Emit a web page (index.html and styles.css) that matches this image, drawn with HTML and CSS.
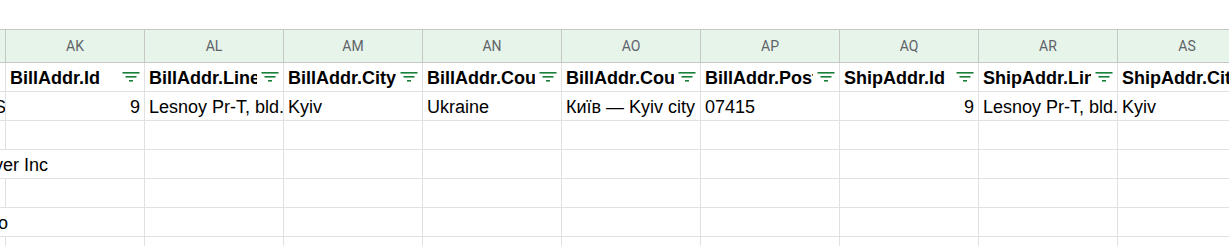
FILE: index.html
```html
<!DOCTYPE html>
<html>
<head>
<meta charset="utf-8">
<link rel="stylesheet" href="styles.css">
</head>
<body>
<div class="sheet">
  <div class="spacer"></div>
  <div class="row colhead">
    <div class="c first"></div>
    <div class="c">AK</div>
    <div class="c">AL</div>
    <div class="c">AM</div>
    <div class="c">AN</div>
    <div class="c">AO</div>
    <div class="c">AP</div>
    <div class="c">AQ</div>
    <div class="c">AR</div>
    <div class="c">AS</div>
  </div>
  <div class="row hdr">
    <div class="c first"></div>
    <div class="c f"><span class="t">BillAddr.Id</span><span class="fb"><svg width="18" height="12" viewBox="0 0 18 12"><rect x="0.5" y="1" width="17" height="1.6"/><rect x="3.5" y="5" width="11" height="1.6"/><rect x="7" y="9" width="4" height="1.6"/></svg></span></div>
    <div class="c f"><span class="t">BillAddr.Line1</span><span class="fb"><svg width="18" height="12" viewBox="0 0 18 12"><rect x="0.5" y="1" width="17" height="1.6"/><rect x="3.5" y="5" width="11" height="1.6"/><rect x="7" y="9" width="4" height="1.6"/></svg></span></div>
    <div class="c f"><span class="t">BillAddr.City</span><span class="fb"><svg width="18" height="12" viewBox="0 0 18 12"><rect x="0.5" y="1" width="17" height="1.6"/><rect x="3.5" y="5" width="11" height="1.6"/><rect x="7" y="9" width="4" height="1.6"/></svg></span></div>
    <div class="c f"><span class="t">BillAddr.Country</span><span class="fb"><svg width="18" height="12" viewBox="0 0 18 12"><rect x="0.5" y="1" width="17" height="1.6"/><rect x="3.5" y="5" width="11" height="1.6"/><rect x="7" y="9" width="4" height="1.6"/></svg></span></div>
    <div class="c f"><span class="t">BillAddr.CountrySubDivisionCode</span><span class="fb"><svg width="18" height="12" viewBox="0 0 18 12"><rect x="0.5" y="1" width="17" height="1.6"/><rect x="3.5" y="5" width="11" height="1.6"/><rect x="7" y="9" width="4" height="1.6"/></svg></span></div>
    <div class="c f"><span class="t">BillAddr.PostalCode</span><span class="fb"><svg width="18" height="12" viewBox="0 0 18 12"><rect x="0.5" y="1" width="17" height="1.6"/><rect x="3.5" y="5" width="11" height="1.6"/><rect x="7" y="9" width="4" height="1.6"/></svg></span></div>
    <div class="c f"><span class="t">ShipAddr.Id</span><span class="fb"><svg width="18" height="12" viewBox="0 0 18 12"><rect x="0.5" y="1" width="17" height="1.6"/><rect x="3.5" y="5" width="11" height="1.6"/><rect x="7" y="9" width="4" height="1.6"/></svg></span></div>
    <div class="c f"><span class="t">ShipAddr.Line1</span><span class="fb"><svg width="18" height="12" viewBox="0 0 18 12"><rect x="0.5" y="1" width="17" height="1.6"/><rect x="3.5" y="5" width="11" height="1.6"/><rect x="7" y="9" width="4" height="1.6"/></svg></span></div>
    <div class="c"><span class="t">ShipAddr.City</span></div>
  </div>
  <div class="row">
    <div class="c first"><span class="frag-s">S</span></div>
    <div class="c num">9</div>
    <div class="c">Lesnoy Pr-T, bld. 7</div>
    <div class="c">Kyiv</div>
    <div class="c">Ukraine</div>
    <div class="c">Київ — Kyiv city</div>
    <div class="c">07415</div>
    <div class="c num">9</div>
    <div class="c">Lesnoy Pr-T, bld. 7</div>
    <div class="c">Kyiv</div>
  </div>
  <div class="row">
    <div class="c first"></div>
    <div class="c"></div><div class="c"></div><div class="c"></div><div class="c"></div><div class="c"></div><div class="c"></div><div class="c"></div><div class="c"></div><div class="c"></div>
  </div>
  <div class="row">
    <div class="c first ov"><span class="frag-inc">ver Inc</span></div>
    <div class="c"></div><div class="c"></div><div class="c"></div><div class="c"></div><div class="c"></div><div class="c"></div><div class="c"></div><div class="c"></div><div class="c"></div>
  </div>
  <div class="row">
    <div class="c first"></div>
    <div class="c"></div><div class="c"></div><div class="c"></div><div class="c"></div><div class="c"></div><div class="c"></div><div class="c"></div><div class="c"></div><div class="c"></div>
  </div>
  <div class="row">
    <div class="c first ov"><span class="frag-o">o</span></div>
    <div class="c"></div><div class="c"></div><div class="c"></div><div class="c"></div><div class="c"></div><div class="c"></div><div class="c"></div><div class="c"></div><div class="c"></div>
  </div>
  <div class="row">
    <div class="c first"></div>
    <div class="c"></div><div class="c"></div><div class="c"></div><div class="c"></div><div class="c"></div><div class="c"></div><div class="c"></div><div class="c"></div><div class="c"></div>
  </div>
</div>
</body>
</html>
```
FILE: styles.css
```css
html, body {
  margin: 0;
  padding: 0;
  background: #ffffff;
}

.sheet {
  width: 1229px;
  height: 246px;
  overflow: hidden;
  font-family: "Liberation Sans", Arial, sans-serif;
  font-size: 18px;
  color: #000000;
}

.spacer {
  height: 29px;
}

.row {
  display: flex;
  height: 29px;
  box-sizing: border-box;
  border-bottom: 1px solid #e1e1e1;
  width: max-content;
}

.c {
  flex: none;
  width: 139px;
  box-sizing: border-box;
  border-right: 1px solid #e1e1e1;
  position: relative;
  overflow: hidden;
  white-space: nowrap;
  display: flex;
  align-items: flex-end;
  padding: 0 4px 2px 4px;
  line-height: 21px;
}

.c.first {
  width: 6px;
  padding: 0 0 2px 0;
}

.c.num {
  justify-content: flex-end;
}

.c.ov {
  overflow: visible;
  border-right-color: transparent;
}

.frag-s {
  margin-left: -6px;
}

.frag-inc {
  margin-left: -6px;
}

.frag-o {
  margin-left: -2px;
}

.colhead {
  height: 34px;
  border-top: 1px solid #c4c7c5;
  border-bottom: 1px solid #c4c7c5;
  background: #e6f4ea;
}

.colhead .c {
  border-right-color: #c4c7c5;
  justify-content: center;
  align-items: center;
  padding: 0;
  font-family: Roboto, "Liberation Sans", sans-serif;
  font-size: 14px;
  line-height: 20px;
  color: #5f6368;
}

.hdr .c {
  font-weight: bold;
}

.hdr .c.f {
  padding-right: 26px;
}

.t {
  flex: 0 1 auto;
  min-width: 0;
  overflow: hidden;
}

.fb {
  position: absolute;
  top: 0;
  bottom: 0;
  right: 0;
  width: 26px;
  display: flex;
  align-items: center;
  justify-content: center;
  padding-right: 1px;
  box-sizing: border-box;
}

.fb svg {
  fill: #188038;
  display: block;
}
```
